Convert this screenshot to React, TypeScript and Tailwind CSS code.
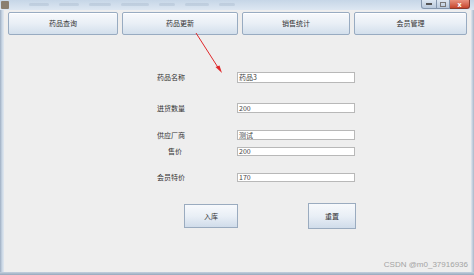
import React from "react";

const cjk = { fontFamily: '"Noto Sans CJK SC", "Liberation Sans", sans-serif' };

const TopButton = ({ label }: { label: string }) => (
  <button
    className="h-[23px] rounded-[2px] border border-[#98abc1] bg-gradient-to-b from-[#f7f9fc] via-[#e9eff6] to-[#d3dfec] text-[7px] text-[#333] shadow-[inset_0_1px_0_#ffffff]"
    style={cjk}
  >
    {label}
  </button>
);

const Field = ({
  label,
  value,
  h,
  mt,
  indent = 0,
}: {
  label: string;
  value: string;
  h: string;
  mt: string;
  indent?: number;
}) => (
  <div className={`flex items-center ${mt}`}>
    <div className="w-[80px] text-[7px] leading-none text-[#333]" style={cjk}>
      <span className={indent ? "pl-[11px]" : ""}>{label}</span>
    </div>
    <div
      className={`flex w-[118px] items-center border border-[#b8b8b8] bg-white px-[1px] text-[7px] leading-none text-[#444] ${h}`}
      style={cjk}
    >
      {value}
    </div>
  </div>
);

const App = () => {
  return (
    <div className="relative flex h-[275px] w-[474px] flex-col overflow-hidden bg-[#eeeeee]">
      {/* title bar (blurred in the screenshot) */}
      <div className="flex h-[10px] items-start bg-gradient-to-b from-[#c6d6e7] to-[#dde7f2]">
        <div className="ml-[1px] mt-[1px] h-[8px] w-[8px] rounded-[1px] bg-[#8a7f70]" />
        <div className="ml-[20px] mt-[3px] flex gap-[10px] opacity-25">
          <div className="h-[3px] w-[20px] rounded-full bg-[#8fa4bb]" />
          <div className="h-[3px] w-[20px] rounded-full bg-[#8fa4bb]" />
          <div className="h-[3px] w-[22px] rounded-full bg-[#8fa4bb]" />
          <div className="h-[3px] w-[28px] rounded-full bg-[#8fa4bb]" />
          <div className="h-[3px] w-[16px] rounded-full bg-[#8fa4bb]" />
          <div className="h-[3px] w-[24px] rounded-full bg-[#8fa4bb]" />
          <div className="h-[3px] w-[16px] rounded-full bg-[#8fa4bb]" />
        </div>
        <div className="ml-auto mr-[4px] flex h-[9px]">
          <div className="flex w-[16px] items-center justify-center rounded-bl-[3px] border border-t-0 border-[#8496ad] bg-gradient-to-b from-[#dde7f2] to-[#b9c9dc]">
            <div className="h-[2px] w-[6px] bg-[#555]" />
          </div>
          <div className="flex w-[13px] items-center justify-center border-b border-r border-[#8496ad] bg-gradient-to-b from-[#dde7f2] to-[#b9c9dc]">
            <div className="h-[5px] w-[6px] border border-[#777]" />
          </div>
          <div className="flex w-[20px] items-center justify-center rounded-br-[3px] border-b border-r border-[#8a3b2f] bg-gradient-to-b from-[#e8907e] to-[#c6432c] text-[7px] font-bold leading-none text-white">
            x
          </div>
        </div>
      </div>

      <div className="flex flex-1">
        {/* left frame */}
        <div className="w-[4px] bg-gradient-to-r from-[#9eaec2] via-[#c9d6e4] to-[#e1e8f0]" />

        <div className="flex flex-1 flex-col">
          <div className="grid grid-cols-[110px_116px_108px_113px] gap-x-[4px] pl-[4px] pt-[2px]">
            <TopButton label="药品查询" />
            <TopButton label="药品更新" />
            <TopButton label="销售统计" />
            <TopButton label="会员管理" />
          </div>

          <div className="ml-[153px] mt-[37px] flex flex-col">
            <Field label="药品名称" value="药品3" h="h-[11px]" mt="mt-0" />
            <Field label="进货数量" value="200" h="h-[10px]" mt="mt-[20px]" />
            <Field label="供应厂商" value="测试" h="h-[10px]" mt="mt-[17px]" />
            <Field label="售价" value="200" h="h-[9px]" mt="mt-[7px]" indent={1} />
            <Field label="会员特价" value="170" h="h-[9px]" mt="mt-[17px]" />
          </div>

          <div className="ml-[180px] mt-[21px] flex items-center">
            <button
              className="h-[24px] w-[54px] border border-[#9aabbf] bg-gradient-to-b from-[#f7f9fc] via-[#e9eff6] to-[#d0dcea] text-[7px] text-[#333]"
              style={cjk}
            >
              入库
            </button>
            <button
              className="ml-[70px] h-[26px] w-[48px] border border-[#9aabbf] bg-gradient-to-b from-[#f7f9fc] via-[#e9eff6] to-[#d0dcea] text-[7px] text-[#333]"
              style={cjk}
            >
              重置
            </button>
          </div>
        </div>

        {/* right frame */}
        <div className="w-[3px] bg-gradient-to-r from-[#e1e8f0] to-[#a9b8ca]" />
      </div>

      {/* bottom frame */}
      <div className="h-[3px] bg-gradient-to-b from-[#c4d1df] to-[#96a7bb]" />

      {/* red annotation arrow */}
      <svg className="pointer-events-none absolute left-0 top-0" width="474" height="275">
        <line x1="196" y1="33" x2="219" y2="69" stroke="#e0282a" strokeWidth="1" />
        <polygon points="222,73 215.5,67 219.5,65.5" fill="#e0282a" />
      </svg>

      {/* watermark */}
      <div
        className="absolute right-[6px] top-[261px] text-[8px] leading-none text-[#a3a3a3]"
        style={{ fontFamily: '"Liberation Sans", sans-serif' }}
      >
        CSDN @m0_37916936
      </div>
    </div>
  );
};

export default App;
